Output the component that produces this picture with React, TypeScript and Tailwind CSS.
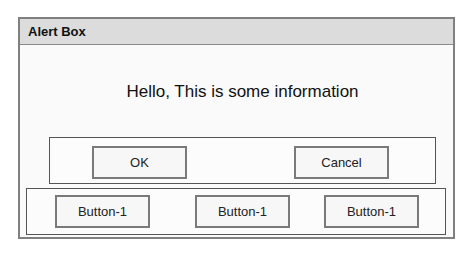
export default function App() {
  const btn =
    "flex h-[33px] w-[95px] items-center justify-center border-2 border-[#7a7a7a] bg-[#f7f7f7] text-[13px] text-[#222]";

  return (
    <div className="h-[255px] w-[474px] bg-white pl-[18px] pt-[17px] font-['Liberation_Sans',Arial,sans-serif]">
      <div className="flex h-[222px] w-[437px] flex-col border-2 border-[#808080] bg-[#fafafa]">
        <div className="flex h-[26px] shrink-0 items-center border-b border-[#8a8a8a] bg-[#dcdcdc] pl-[8px] text-[13px] font-bold text-[#111]">
          Alert Box
        </div>
        <div className="flex h-[92px] shrink-0 items-center justify-center pl-[12px] pt-[2px] text-[17px] text-[#111]">
          Hello, This is some information
        </div>
        <div className="ml-[29px] flex h-[47px] w-[387px] shrink-0 justify-between border border-[#555] bg-[#fcfcfc] pl-[42px] pr-[46px] pt-[8px]">
          <div className={btn + " h-[32px]"}>OK</div>
          <div className={btn + " h-[32px]"}>Cancel</div>
        </div>
        <div className="ml-[6px] mt-[4px] flex h-[47px] w-[420px] shrink-0 items-start border border-[#555] bg-[#fcfcfc] pl-[28px] pt-[6px]">
          <div className={btn}>Button-1</div>
          <div className={btn + " ml-[45px]"}>Button-1</div>
          <div className={btn + " ml-[34px]"}>Button-1</div>
        </div>
      </div>
    </div>
  );
}
